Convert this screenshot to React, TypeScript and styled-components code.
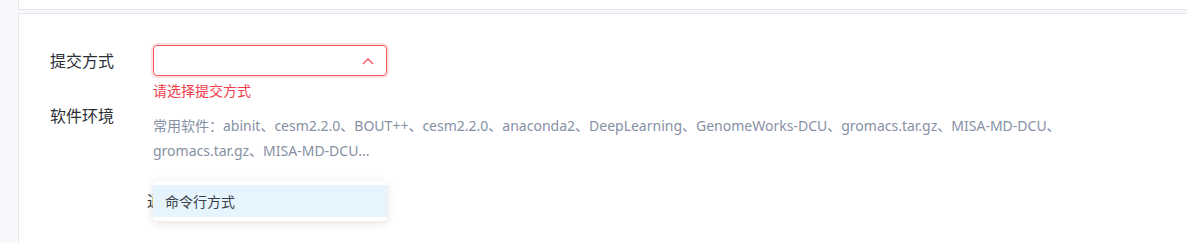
import React from 'react';
import styled, { createGlobalStyle } from 'styled-components';

const GlobalStyle = createGlobalStyle`
  html, body {
    margin: 0;
    padding: 0;
    background: #f7f8fb;
    font-family: "Noto Sans", "Noto Sans CJK SC", sans-serif;
  }
`;

const Page = styled.div`
  padding-left: 18px;
  height: 243px;
  overflow: hidden;
`;
const TopCard = styled.div`
  height: 9px;
  background: #fff;
  border-left: 1px solid #e4e6ee;
  border-bottom: 1px solid #e4e6ee;
`;
const FormCard = styled.div`
  margin-top: 3px;
  height: 260px;
  background: #fff;
  border-left: 1px solid #e4e6ee;
  border-top: 1px solid #e4e6ee;
  padding: 31px 0 0 31px;
`;
const Row = styled.div<{ $gap?: number }>`
  display: grid;
  grid-template-columns: 103px 1fr;
  margin-top: ${(p) => p.$gap ?? 0}px;
`;
const Label = styled.div<{ $lh: number }>`
  font-family: "Noto Sans CJK SC", sans-serif;
  font-size: 16px;
  line-height: ${(p) => p.$lh}px;
  color: #2b2f36;
`;
const Field = styled.div`
  position: relative;
`;
const Select = styled.div`
  box-sizing: border-box;
  width: 234px;
  height: 31px;
  border: 1px solid #f4535f;
  border-radius: 4px;
  box-shadow: 0 0 0 2px rgba(245, 83, 95, 0.18);
  display: flex;
  align-items: center;
  justify-content: flex-end;
  padding-right: 12px;
`;
const ErrorText = styled.div`
  margin-top: 4px;
  font-family: "Noto Sans CJK SC", sans-serif;
  font-size: 14px;
  line-height: 20px;
  color: #f23d4c;
`;
const SoftwareText = styled.div`
  padding-top: 10px;
  font-size: 14px;
  line-height: 25px;
  color: #8690a4;
`;
const Hidden = styled.div`
  margin-left: -6px;
  margin-top: 25px;
  font-family: "Noto Sans CJK SC", sans-serif;
  font-size: 16px;
  line-height: 24px;
  color: #2b2f36;
`;
const Popup = styled.div`
  position: absolute;
  top: 136px;
  left: 0;
  width: 234px;
  box-sizing: border-box;
  padding: 4px 0;
  background: #fff;
  border-radius: 4px;
  box-shadow: 0 2px 8px rgba(0, 0, 0, 0.12);
  z-index: 2;
`;
const Option = styled.div<{ $active?: boolean }>`
  height: 32px;
  line-height: 32px;
  padding-left: 12px;
  font-family: "Noto Sans CJK SC", sans-serif;
  font-size: 14px;
  color: #3a3f48;
  background: ${(p) => (p.$active ? '#e6f5fd' : '#fff')};
`;

const Chevron = () => (
  <svg width="12" height="8" viewBox="0 0 12 8">
    <path d="M1 7L6 2L11 7" fill="none" stroke="#f4535f" strokeWidth="1.4" />
  </svg>
);

const App = () => (
  <Page>
    <GlobalStyle />
    <TopCard />
    <FormCard>
      <Row>
        <Label $lh={31}>提交方式</Label>
        <Field>
          <Select>
            <Chevron />
          </Select>
          <ErrorText>请选择提交方式</ErrorText>
          <Popup>
            <Option $active>命令行方式</Option>
          </Popup>
        </Field>
      </Row>
      <Row $gap={3}>
        <Label $lh={24}>软件环境</Label>
        <Field>
          <SoftwareText>
            常用软件：abinit、cesm2.2.0、BOUT++、cesm2.2.0、anaconda2、DeepLearning、GenomeWorks-DCU、gromacs.tar.gz、MISA-MD-DCU、
            <br />
            gromacs.tar.gz、MISA-MD-DCU...
          </SoftwareText>
          <Hidden>通过</Hidden>
        </Field>
      </Row>
    </FormCard>
  </Page>
);

export default App;
